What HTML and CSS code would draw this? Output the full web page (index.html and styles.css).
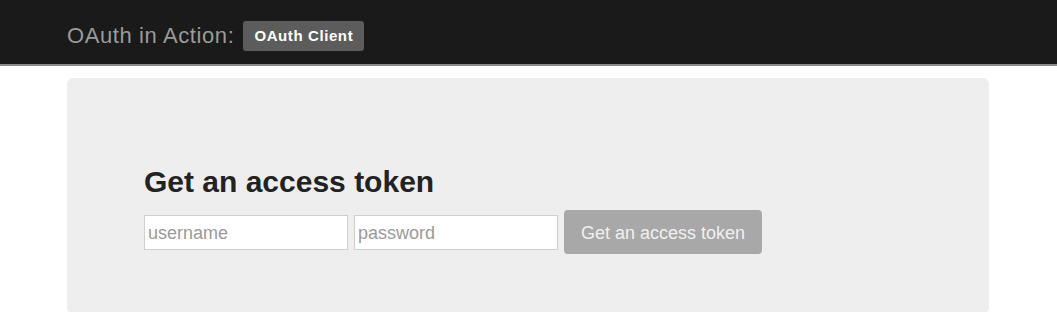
FILE: index.html
```html
<!DOCTYPE html>
<html>
<head>
<meta charset="utf-8">
<link rel="stylesheet" href="styles.css">
</head>
<body>
<nav class="navbar">
  <span class="brand">OAuth in Action:</span>
  <span class="badge">OAuth Client</span>
</nav>
<main class="container">
  <section class="jumbotron">
    <h2 class="title">Get an access token</h2>
    <form class="form">
      <input class="field" type="text" placeholder="username">
      <input class="field" type="password" placeholder="password">
      <button class="btn" type="button">Get an access token</button>
    </form>
  </section>
</main>
</body>
</html>
```
FILE: styles.css
```css
html, body {
  margin: 0;
  padding: 0;
  background: #ffffff;
  font-family: "Liberation Sans", Arial, sans-serif;
}
.navbar {
  box-sizing: border-box;
  height: 66px;
  background: #1a1a1a;
  border-bottom: 2px solid #8a8a8a;
  display: flex;
  align-items: center;
  padding: 8px 0 0 67px;
  gap: 9px;
}
.brand {
  color: #9a9a9a;
  font-size: 22px;
  letter-spacing: 0.6px;
}
.badge {
  background: #5c5c5c;
  color: #ffffff;
  font-weight: bold;
  font-size: 15px;
  letter-spacing: 0.6px;
  padding: 0 11px;
  height: 30px;
  line-height: 30px;
  border-radius: 3px;
}
.container {
  margin: 12px 0 0 67px;
  width: 922px;
}
.jumbotron {
  background: #eeeeee;
  border-radius: 6px;
  padding: 87px 77px 60px 77px;
}
.title {
  margin: 0 0 12px 0;
  font-size: 30px;
  font-weight: bold;
  color: #222222;
  line-height: 33px;
}
.form {
  display: flex;
  align-items: center;
  gap: 6px;
}
.field {
  box-sizing: border-box;
  width: 204px;
  height: 35px;
  border: 1px solid #cfcfcf;
  background: #ffffff;
  font-family: "Liberation Sans", Arial, sans-serif;
  font-size: 18px;
  padding: 2px 3px 0 3px;
  margin: 0;
  color: #555;
}
.field::placeholder {
  color: #9a9a9a;
}
.btn {
  box-sizing: border-box;
  width: 198px;
  height: 44px;
  background: #a8a8a8;
  border: none;
  border-radius: 4px;
  color: #f0f0f0;
  font-family: "Liberation Sans", Arial, sans-serif;
  font-size: 18px;
  padding: 2px 0 0 0;
  margin: 0;
}
```
